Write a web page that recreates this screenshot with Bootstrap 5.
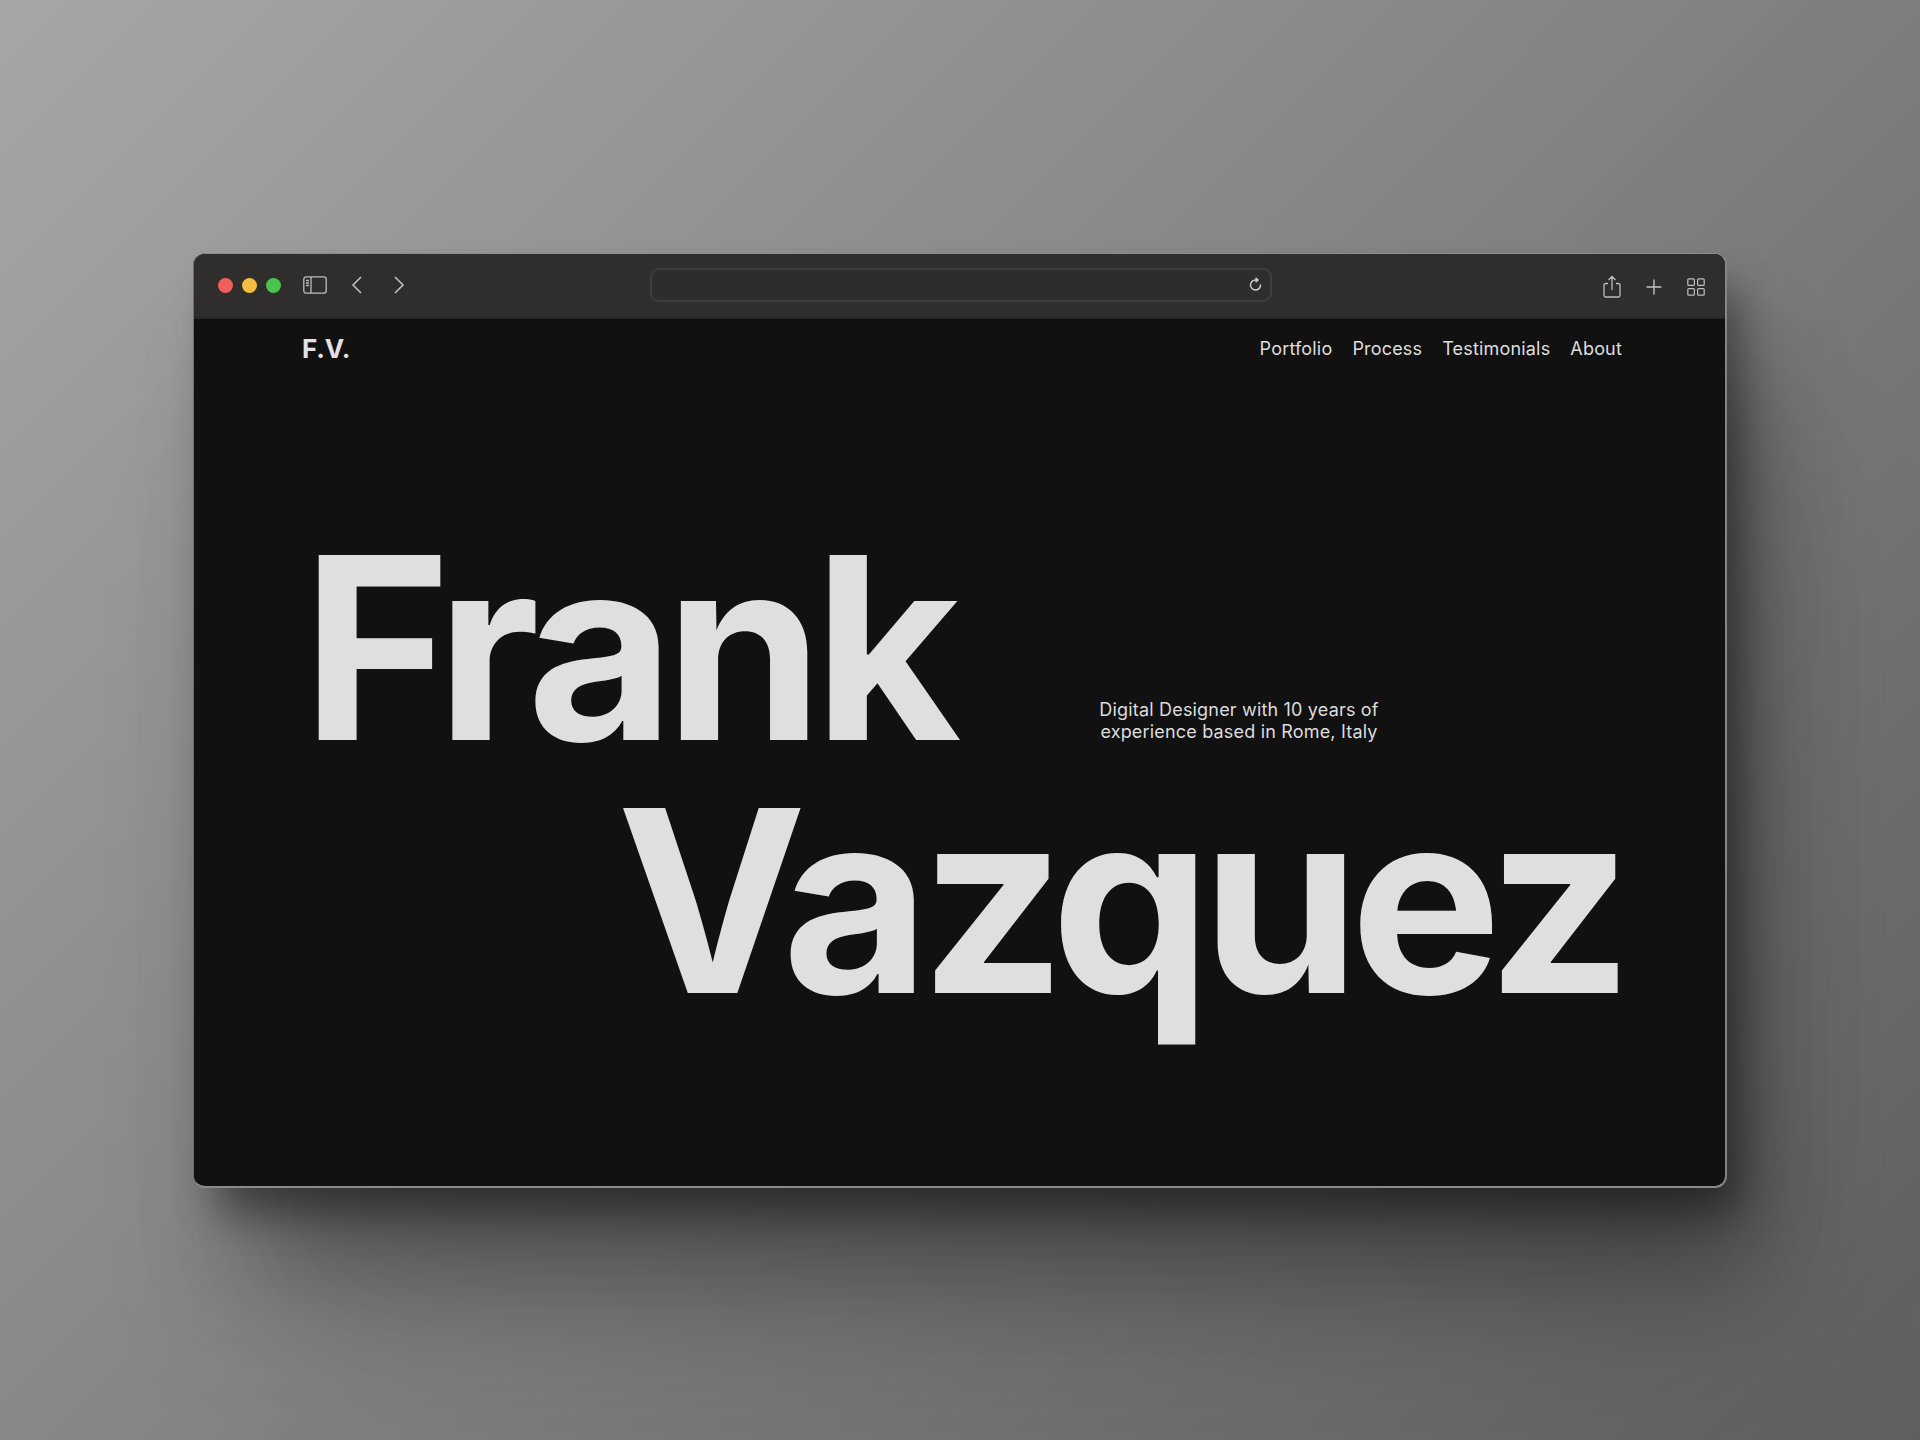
<!DOCTYPE html>
<html lang="en">
<head>
<meta charset="utf-8">
<title>Frank Vazquez</title>
<link href="https://cdn.jsdelivr.net/npm/bootstrap@5.3.0/dist/css/bootstrap.min.css" rel="stylesheet">
<style>
html,body{height:1440px;overflow:hidden}
body{background:linear-gradient(135deg,#a6a6a6 0%,#5f5f5f 100%);font-family:Inter,"Liberation Sans",sans-serif;padding:253px 193px 0 193px}
.win-frame{width:1534px;height:935px;background:#111;border-radius:12px;border-style:solid;border-width:1px 2px 2px 1px;border-color:#8c8c8c #858585 #8a8a8a #6f6f6f;overflow:hidden;box-shadow:18px 30px 40px -6px rgba(0,0,0,.42),40px 90px 100px -10px rgba(0,0,0,.3),60px 170px 170px -20px rgba(0,0,0,.13)}
.tool-bar{height:65px;background:#302e2d;border-bottom:2px solid #282726;padding:0 20px 0 24px;flex:none}
.dot-light{width:15px;height:15px;border-radius:50%}
.dot-group{gap:9px;margin-right:22px}
.d-red{background:#ef5f5a}.d-yel{background:#f5bd41}.d-grn{background:#4cc24e}
.url-field{position:absolute;left:456px;top:14px;width:622px;height:34px;border:2px solid #3e3d3b;border-radius:9px;background:#2f2d2c;padding-right:7px}
.tool-zone{position:relative}
.side-icon{margin-bottom:2px}
.back-icon{margin-left:23px;margin-bottom:2px}
.fwd-icon{margin-left:28px;margin-bottom:2px}
.right-tools{gap:25px;margin-top:2px}
.site-nav{padding:0 103px 0 108px;height:58px;color:#e3e3e3;flex:none}
.nav-links{gap:20px}
.brand-mark{font-size:26px;font-weight:700;letter-spacing:-.1px;color:#e2e2e2}
.nav-item-x{font-size:18px;font-weight:400;color:#dedede;text-decoration:none;letter-spacing:.18px}
.hero-zone{padding:0 102px 0 108px}
.big-name{font-size:254px;line-height:253px;font-weight:700;letter-spacing:-9.5px;color:#dfdfdf;margin:0}
.tagline{font-size:18px;line-height:22px;text-align:center;color:#dcdcdc;letter-spacing:.18px;width:290px}
.first-row{padding-top:144px}
.first-name{width:792px}
.tag-wrap{padding-bottom:31px}
</style>
</head>
<body>
<div class="win-frame d-flex flex-column">
  <div class="tool-bar tool-zone d-flex align-items-center justify-content-between">
    <div class="d-flex align-items-center">
      <div class="d-flex dot-group"><span class="dot-light d-red"></span><span class="dot-light d-yel"></span><span class="dot-light d-grn"></span></div>
      <svg class="side-icon" width="24" height="18" viewBox="0 0 24 18" fill="none" stroke="#bdbcbb" stroke-width="1.3"><rect x=".8" y=".8" width="22.4" height="16.4" rx="2.5"/><path d="M8 1v16M3 4.5h3M3 7h3M3 9.500h3"/></svg>
      <svg class="back-icon" width="14" height="20" viewBox="0 0 14 20" fill="none" stroke="#c4c3c2" stroke-width="1.5"><path d="M11 2 3 10l8 8"/></svg>
      <svg class="fwd-icon" width="14" height="20" viewBox="0 0 14 20" fill="none" stroke="#c4c3c2" stroke-width="1.5"><path d="M3 2l8 8-8 8"/></svg>
    </div>
    <div class="url-field d-flex align-items-center justify-content-end">
      <svg width="14" height="16" viewBox="0 0 14 16" fill="none" stroke="#d4d3d2" stroke-width="1.4"><path d="M11.500 7.500a5 5 0 1 1-5-4.500h2"/><path d="M6.500.8 9 3 6.500 5.200"/></svg>
    </div>
    <div class="d-flex align-items-center right-tools">
      <svg width="18" height="24" viewBox="0 0 18 24" fill="none" stroke="#bdbcbb" stroke-width="1.3"><path d="M5 8.500H2.500a1.500 1.500 0 0 0-1.500 1.500v10.500A1.500 1.500 0 0 0 2.500 22h13a1.500 1.500 0 0 0 1.500-1.500V10a1.500 1.500 0 0 0-1.500-1.500H13M9 15V1.500M5.500 5 9 1.500 12.500 5"/></svg>
      <svg width="16" height="16" viewBox="0 0 16 16" fill="none" stroke="#c4c3c2" stroke-width="1.4"><path d="M8 .5v15M.5 8h15"/></svg>
      <svg width="18" height="18" viewBox="0 0 18 18" fill="none" stroke="#bdbcbb" stroke-width="1.2"><rect x=".8" y=".8" width="6.600" height="6.600" rx="1"/><rect x="10.600" y=".8" width="6.600" height="6.600" rx="1"/><rect x=".8" y="10.600" width="6.600" height="6.600" rx="1"/><rect x="10.600" y="10.600" width="6.600" height="6.600" rx="1"/></svg>
    </div>
  </div>
  <nav class="site-nav d-flex align-items-center justify-content-between">
    <span class="brand-mark">F.V.</span>
    <div class="d-flex nav-links">
      <a class="nav-item-x" href="#">Portfolio</a>
      <a class="nav-item-x" href="#">Process</a>
      <a class="nav-item-x" href="#">Testimonials</a>
      <a class="nav-item-x" href="#">About</a>
    </div>
  </nav>
  <main class="hero-zone flex-grow-1">
    <div class="first-row d-flex align-items-end">
      <h1 class="big-name first-name">Frank</h1>
      <div class="tag-wrap"><p class="tagline m-0">Digital Designer with 10 years of experience based in Rome, Italy</p></div>
    </div>
    <div class="d-flex justify-content-end">
      <h1 class="big-name">Vazquez</h1>
    </div>
  </main>
</div>
<script src="https://cdn.jsdelivr.net/npm/bootstrap@5.3.0/dist/js/bootstrap.bundle.min.js"></script>
</body>
</html>
